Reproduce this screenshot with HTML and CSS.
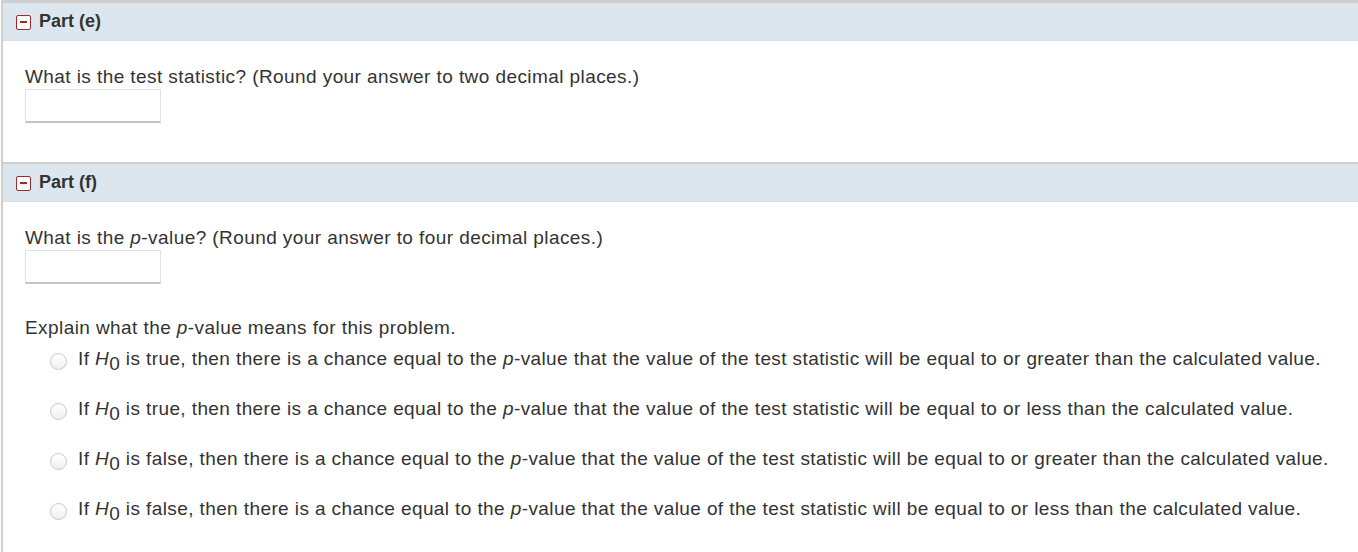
FILE: index.html
```html
<!DOCTYPE html>
<html>
<head>
<meta charset="utf-8">
<link rel="stylesheet" href="styles.css">
</head>
<body>
<div class="page">
  <section class="part">
    <div class="part-head">
      <span class="toggle"><span class="minus"></span></span>
      <span class="part-title">Part (e)</span>
    </div>
    <div class="part-body part-body-e">
      <p class="question">What is the test statistic? (Round your answer to two decimal places.)</p>
      <div class="answer-box"></div>
    </div>
  </section>
  <section class="part part-sep">
    <div class="part-head">
      <span class="toggle"><span class="minus"></span></span>
      <span class="part-title">Part (f)</span>
    </div>
    <div class="part-body">
      <p class="question">What is the <i>p</i>-value? (Round your answer to four decimal places.)</p>
      <div class="answer-box"></div>
      <p class="question explain">Explain what the <i>p</i>-value means for this problem.</p>
      <ul class="options">
        <li class="option"><span class="radio"></span><span>If <i>H</i><sub>0</sub> is true, then there is a chance equal to the <i>p</i>-value that the value of the test statistic will be equal to or greater than the calculated value.</span></li>
        <li class="option"><span class="radio"></span><span>If <i>H</i><sub>0</sub> is true, then there is a chance equal to the <i>p</i>-value that the value of the test statistic will be equal to or less than the calculated value.</span></li>
        <li class="option"><span class="radio"></span><span>If <i>H</i><sub>0</sub> is false, then there is a chance equal to the <i>p</i>-value that the value of the test statistic will be equal to or greater than the calculated value.</span></li>
        <li class="option"><span class="radio"></span><span>If <i>H</i><sub>0</sub> is false, then there is a chance equal to the <i>p</i>-value that the value of the test statistic will be equal to or less than the calculated value.</span></li>
      </ul>
    </div>
  </section>
</div>
</body>
</html>
```
FILE: styles.css
```css
html, body {
  margin: 0;
  padding: 0;
  background: #fff;
}
body {
  font-family: "Liberation Sans", Arial, Helvetica, sans-serif;
  color: #333;
  font-size: 16px;
}
.page {
  margin-left: 1px;
  border-left: 2px solid #cfcfcf;
  border-top: 3px solid #cfcfcf;
  min-height: 549px;
}
.part-sep {
  border-top: 2px solid #cfcfcf;
}
.part-head {
  background: #dce6ef;
  height: 38px;
  display: flex;
  align-items: center;
  padding-left: 13px;
  border-bottom: 1px solid #d4dee7;
  box-sizing: border-box;
}
.toggle {
  width: 13px;
  height: 13px;
  border: 1.5px solid #9a2b2b;
  border-radius: 2px;
  background: #fff;
  display: flex;
  align-items: center;
  justify-content: center;
  margin-right: 8px;
  margin-top: 1px;
}
.minus {
  width: 7px;
  height: 2px;
  background: #9a2b2b;
}
.part-title {
  font-weight: bold;
  font-size: 18px;
  color: #333;
}
.part-body {
  padding: 0 0 0 22px;
}
.part-body-e {
  height: 121px;
  box-sizing: border-box;
  padding-top: 24px;
}
.question {
  margin: 0;
  font-size: 19px;
  letter-spacing: 0.42px;
  line-height: 24px;
}
.part-sep .part-body {
  padding-top: 24px;
}
.answer-box {
  width: 134px;
  height: 31px;
  border: 1px solid #e2e2e2;
  border-bottom: 2px solid #c4c4c4;
  margin-top: 0;
  background: #fff;
}
.explain {
  margin-top: 32px;
}
.options {
  list-style: none;
  margin: -6px 0 0 0;
  padding: 0 0 0 25px;
}
.option {
  display: flex;
  align-items: center;
  font-size: 19px;
  letter-spacing: 0.4px;
  line-height: 24px;
  height: 50px;
}
.radio {
  width: 15px;
  height: 15px;
  border: 1px solid #c8c8c8;
  border-radius: 50%;
  background: linear-gradient(#fff, #f0f0f0);
  margin-right: 11px;
  flex: none;
  margin-top: 4px;
}
.option sub {
  font-size: 19px;
  vertical-align: -5px;
  line-height: 0;
}
```
